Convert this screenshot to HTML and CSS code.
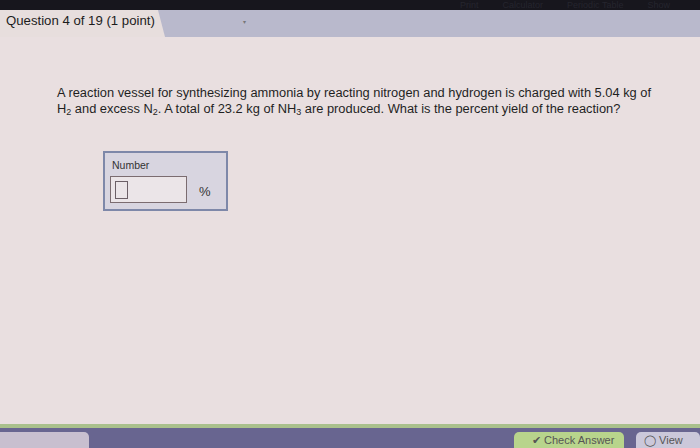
FILE: index.html
```html
<!DOCTYPE html>
<html>
<head>
<meta charset="utf-8">
<link rel="stylesheet" href="styles.css">
</head>
<body>
<div class="page">
  <div class="topbar">
    <span class="tool">Print</span>
    <span class="tool">Calculator</span>
    <span class="tool">Periodic Table</span>
    <span class="tool">Show</span>
  </div>
  <div class="header">
    <div class="tab">Question 4 of 19 (1 point)</div>
    <div class="bar"><span class="dot">▾</span></div>
  </div>
  <div class="content">
    <p class="question">A reaction vessel for synthesizing ammonia by reacting nitrogen and hydrogen is charged with 5.04 kg of<br>H<sub>2</sub> and excess N<sub>2</sub>. A total of 23.2 kg of NH<sub>3</sub> are produced. What is the percent yield of the reaction?</p>
    <div class="answer">
      <div class="label">Number</div>
      <div class="row">
        <div class="input"><span class="caret"></span></div>
        <span class="unit">%</span>
      </div>
    </div>
  </div>
  <div class="footer">
    <div class="line"></div>
    <div class="fbar">
      <div class="ftab"></div>
      <div class="spacer"></div>
      <div class="btn check">✔ Check Answer</div>
      <div class="btn view">◯ View</div>
    </div>
  </div>
</div>
</body>
</html>
```
FILE: styles.css
```css
html, body { margin: 0; padding: 0; }
body {
  width: 700px; height: 448px; overflow: hidden;
  font-family: "Liberation Sans", Arial, sans-serif;
  background: #e9dfe0;
}
.page { display: flex; flex-direction: column; height: 448px; }
.topbar {
  height: 10px; background: #17161d;
  display: flex; justify-content: flex-end; align-items: flex-end;
  gap: 24px; padding-right: 30px; overflow: hidden;
}
.tool { font-size: 9px; line-height: 9px; color: #25252e; }
.header { display: flex; height: 27px; background: #b9b9cc; }
.tab {
  width: 165px; box-sizing: border-box;
  padding-left: 6px; padding-top: 3px;
  background: #e7dedd; font-size: 13.2px; color: #1c1c1c;
  clip-path: polygon(0 0, 158px 0, 100% 100%, 0 100%);
}
.bar { flex: 1; position: relative; }
.dot { position: absolute; left: 78px; top: 8px; font-size: 6px; color: #777; }
.content { flex: 1; padding: 48px 0 0 57px; }
.question {
  margin: 0; font-size: 12.85px; line-height: 16px; color: #1f1f1f;
}
.question sub { font-size: 9px; line-height: 0; vertical-align: -2px; }
.answer {
  margin: 34px 0 0 46px; width: 116px; height: 50px;
  border: 2px solid #7e88a9; background: #d8d5e0;
  padding: 6px 0 0 5px;
}
.label { font-size: 10.5px; line-height: 13px; color: #333; padding-left: 2px; }
.row { display: flex; align-items: center; margin-top: 4px; }
.input {
  width: 77px; height: 27px; box-sizing: border-box;
  border: 1px solid #7b6c70; background: #ebe5e8;
  display: flex; align-items: center; padding-left: 4px;
}
.caret { width: 13px; height: 18px; border: 1px solid #6b5f66; box-sizing: border-box; }
.unit { margin-left: 12px; font-size: 13px; color: #333; padding-top: 3px; }
.footer { display: flex; flex-direction: column; }
.line { height: 4px; background: #a9c08c; }
.fbar { height: 20px; background: #686590; display: flex; align-items: flex-end; }
.ftab { width: 89px; height: 16px; background: #c8bfcf; border-top-right-radius: 5px; }
.spacer { flex: 1; }
.btn {
  height: 16px; border-radius: 5px 5px 0 0; font-size: 11px; line-height: 17px;
  overflow: hidden; color: #555; padding-left: 18px; box-sizing: border-box;
  white-space: nowrap;
}
.check { width: 110px; background: #b8d48c; margin-right: 12px; }
.view { width: 64px; background: #cbc8da; padding-left: 8px; }
```
